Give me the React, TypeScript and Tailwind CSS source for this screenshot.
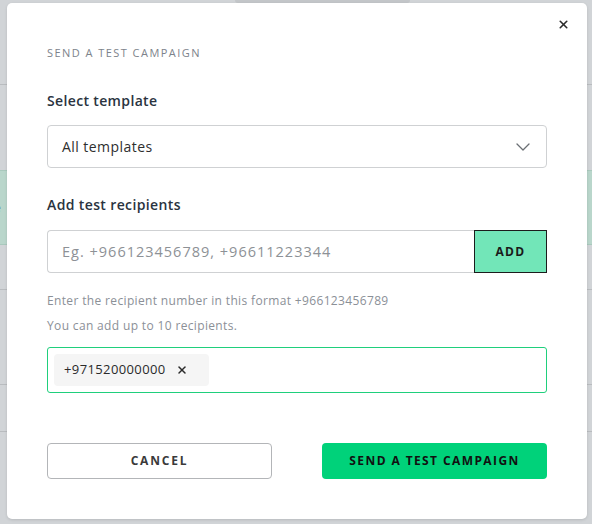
import { ChevronDown, X } from 'lucide-react';

function Backdrop() {
  return (
    <div className="flex flex-col h-full text-[13px] text-[#3a4450]">
      <div className="h-[85px] border-b border-[#b9bcbf]" />
      <div className="h-[85px] flex items-end pb-[9px] -ml-[12px]">ip</div>
      <div className="h-[75px] bg-[#b9d6cb] border-y border-[#a9c9bd] flex items-center -ml-[12px] font-semibold">
        te
      </div>
      <div className="h-[45px] border-b border-[#b9bcbf]" />
      <div className="h-[95px] border-b border-[#b9bcbf]" />
      <div className="h-[47px] border-b border-[#b9bcbf]" />
    </div>
  );
}

export default function App() {
  return (
    <div
      className="relative w-[592px] h-[524px] bg-[#d1d4d7] overflow-hidden"
      style={{ fontFamily: '"Open Sans", "Liberation Sans", sans-serif' }}
    >
      <Backdrop />
      <div className="absolute top-0 left-[235px] w-[175px] h-[3px] rounded-b-md bg-[#c3c6c9]" />
      <div className="absolute left-[7px] top-[3px] w-[580px] h-[516px] bg-white rounded-[5px] shadow-[0_1px_3px_rgba(0,0,0,0.12)] px-[40px] pt-[42px]">
        <button className="absolute right-[17px] top-[15px] text-[#2b2b2b]">
          <X size={13} strokeWidth={3} />
        </button>

        <h2 className="text-[11px] tracking-[1.45px] text-[#7d838b] leading-[16px]">SEND A TEST CAMPAIGN</h2>

        <p className="mt-[31px] text-[14px] font-semibold tracking-[0.35px] text-[#2a3340] leading-[18px]">
          Select template
        </p>
        <div className="mt-[15px] h-[43px] border border-[#cfd1d3] rounded-[4px] flex items-center justify-between pl-[14px] pr-[11px]">
          <span className="text-[14px] tracking-[0.45px] text-[#2e2e2e]">All templates</span>
          <ChevronDown size={24} strokeWidth={1.3} absoluteStrokeWidth className="text-[#6b6f74]" />
        </div>

        <p className="mt-[28px] text-[14px] font-semibold tracking-[0.37px] text-[#2a3340] leading-[18px]">
          Add test recipients
        </p>
        <div className="mt-[16px] h-[43px] flex">
          <input
            className="flex-1 min-w-0 border border-[#cfd1d3] border-r-0 rounded-l-[4px] px-[14px] text-[14.5px] tracking-[1px] outline-none placeholder:text-[#8d9196]"
            placeholder="Eg. +966123456789, +96611223344"
          />
          <button className="w-[73px] bg-[#72e6b8] border border-[#1c1c1c] text-[12px] font-bold tracking-[1.3px] text-[#1a1a1a]">
            ADD
          </button>
        </div>

        <p className="mt-[20px] text-[12px] tracking-[0.35px] text-[#8b9097] leading-[16px]">
          Enter the recipient number in this format +966123456789
        </p>
        <p className="mt-[9px] text-[12px] tracking-[0.35px] text-[#8b9097] leading-[16px]">
          You can add up to 10 recipients.
        </p>

        <div className="mt-[13px] h-[46px] border border-[#1fcf7c] rounded-[3px] flex items-center px-[6px]">
          <div className="h-[32px] w-[155px] bg-[#f5f5f5] rounded-[4px] flex items-center pl-[10px] gap-[10px]">
            <span className="text-[13px] tracking-[0.38px] text-[#2a2a2a]">+971520000000</span>
            <X size={12} strokeWidth={3} className="text-[#2b2b2b]" />
          </div>
        </div>

        <div className="mt-[50px] flex justify-between">
          <button className="w-[225px] h-[36px] border border-[#b3b5b8] rounded-[4px] text-[12px] font-bold tracking-[1.8px] text-[#3a3a3a]">
            CANCEL
          </button>
          <button className="w-[225px] h-[36px] bg-[#00d27a] rounded-[4px] text-[12px] font-bold tracking-[1.4px] text-[#111]">
            SEND A TEST CAMPAIGN
          </button>
        </div>
      </div>
    </div>
  );
}
